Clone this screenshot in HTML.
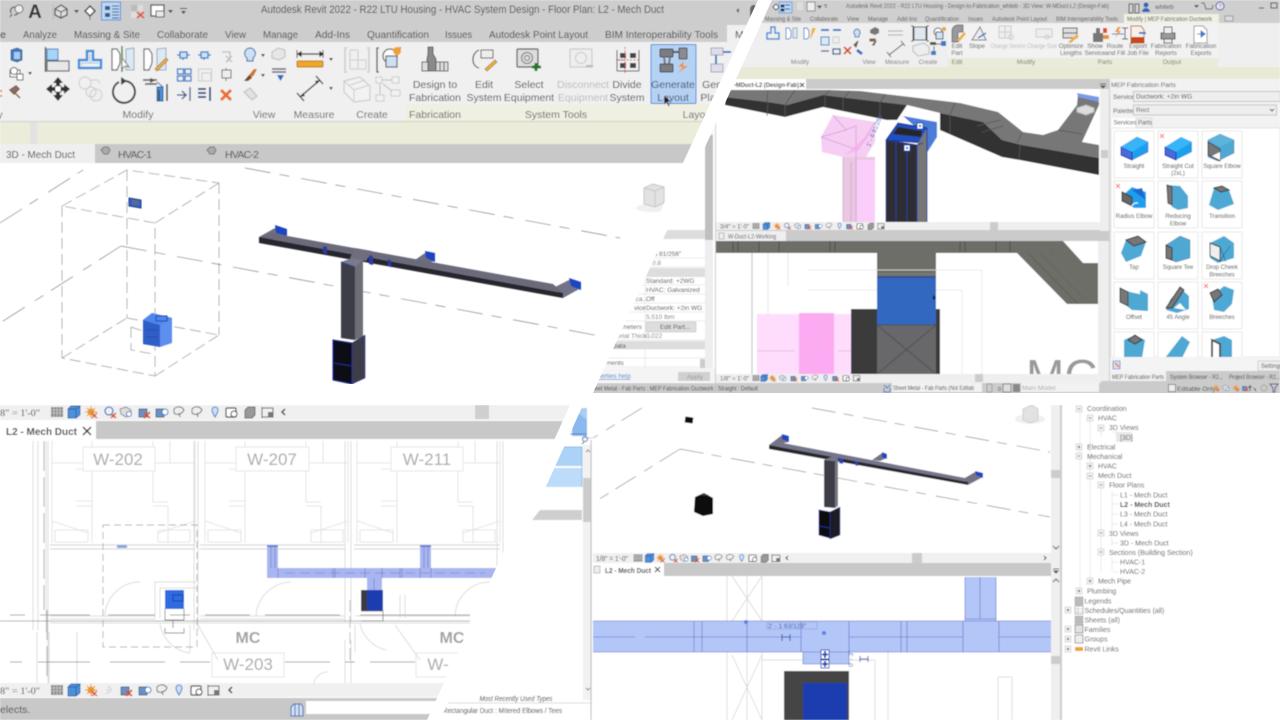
<!DOCTYPE html>
<html><head><meta charset="utf-8"><title>Revit</title>
<style>
html,body{margin:0;padding:0;background:#fff;width:1280px;height:720px;overflow:hidden}
svg{display:block;font-family:"Liberation Sans",sans-serif}
.b1{filter:url(#bl1)}.b2{filter:url(#bl2)}
</style></head><body>
<svg width="1280" height="720" viewBox="0 0 1280 720" xmlns="http://www.w3.org/2000/svg">
<defs>
<filter id="bl1" x="0" y="0" width="100%" height="100%"><feGaussianBlur stdDeviation="0.4"/></filter>
<filter id="bl2" x="0" y="0" width="100%" height="100%"><feGaussianBlur stdDeviation="0.55"/></filter>
<clipPath id="cTL"><polygon points="0,0 758,0 576,395 0,395"/></clipPath>
<clipPath id="cTR"><polygon points="772,0 1280,0 1280,393 593,393"/></clipPath>
<clipPath id="cBL"><polygon points="0,405 570,405 427,720 0,720"/></clipPath>
<clipPath id="cBR"><polygon points="583,405 1280,405 1280,720 440,720"/></clipPath>
<g id="ic-grid"><rect x="-6" y="-5" width="12" height="10" fill="#8c8c8c"/><path d="M-6-2H6M-6 1H6M-3-5V5M0-5V5M3-5V5" stroke="#ddd" stroke-width=".6"/></g>
<g id="ic-cube"><path d="M-6-3 2-3 2 6-6 6ZM-6-3-3-6 6-6 2-3ZM2-3 6-6 6 3 2 6Z" fill="#4d8fd8" stroke="#1e5aa8" stroke-width=".7"/></g>
<g id="ic-sun"><circle r="3.5" fill="#f0a030"/><path d="M-6 0H6M0-6V6M-4-4 4 4M-4 4 4-4" stroke="#e8932a" stroke-width="1"/><path d="M1 2 6 6M6 1 1 6" stroke="#d04020" stroke-width="1.2"/></g>
<g id="ic-shade"><circle cx="-1" cy="-1" r="4" fill="none" stroke="#3a7cc8" stroke-width="1.3"/><path d="M1 2 6 6M6 1 1 6" stroke="#d84a20" stroke-width="1.5"/></g>
<g id="ic-crop"><path d="M-6-3 0-5 5-2 5 3 0 5-5 2Z" fill="#ddd" stroke="#777" stroke-width=".8"/><circle cx="3" cy="2" r="2.5" fill="#fff" stroke="#3a7cc8"/></g>
<g id="ic-hide"><path d="M-6-3H2V5H-6Z" fill="#6a8fc8" stroke="#355" stroke-width=".7"/><path d="M-1 1 5 6M5 0-1 6" stroke="#d84a20" stroke-width="1.6"/></g>
<g id="ic-temp"><path d="M-6-3H2V5H-6Z" fill="#6a8fc8" stroke="#355" stroke-width=".7"/><circle cx="3" cy="0" r="3" fill="#fff" stroke="#3a7cc8"/></g>
<g id="ic-glass"><path d="M-5-3C-2-6 3-6 5-2 3 2-2 4-5 1Z" fill="#eee" stroke="#666" stroke-width=".9"/><path d="M0 1 1 5" stroke="#666"/></g>
<g id="ic-pin"><path d="M0 5C-3 0-3-1-3-2A3 3 0 0 1 3-2C3-1 3 0 0 5Z" fill="#cfe0f5" stroke="#3a7cc8" stroke-width="1"/></g>
<g id="ic-cam"><rect x="-6" y="-4" width="10" height="9" rx="1" fill="#fff" stroke="#444" stroke-width="1.2"/><circle cx="2" cy="2" r="3" fill="#fff" stroke="#333"/></g>
<g id="ic-box"><path d="M-5-2-2-5 5-5 5 3 2 6-5 6Z" fill="#999" stroke="#555" stroke-width=".8"/></g>
<g id="ic-sec"><path d="M-6-5V6M-6-4H5V5H-6" fill="none" stroke="#555" stroke-width="1"/><rect x="0" y="0" width="5" height="5" fill="#777"/></g>
<g id="plus"><rect x="-3" y="-3" width="6" height="6" fill="#f2f2f2" stroke="#d0d0d0" stroke-width=".7"/><path d="M-1.500 0H1.500M0-1.500V1.500" stroke="#666" stroke-width=".7"/></g>
<g id="minus"><rect x="-3" y="-3" width="6" height="6" fill="#f2f2f2" stroke="#d0d0d0" stroke-width=".7"/><path d="M-1.500 0H1.500" stroke="#666" stroke-width=".7"/></g>
</defs>

<rect width="1280" height="720" fill="#fff"/>

<!-- ===== TOP LEFT ===== -->
<g clip-path="url(#cTL)"><g class="b1">
<rect width="760" height="43" fill="#cdcdcd"/>
<rect y="42" width="760" height="80" fill="#f0f0f0"/>
<rect x="405" y="104" width="355" height="17" fill="#eff0e2"/>
<rect y="121" width="760" height="1" fill="#d0d0c4"/>
<rect y="122" width="760" height="22" fill="#ebecd9"/>
<rect x="30" y="122" width="7" height="22" fill="#e2e2e2"/>
<rect y="144" width="760" height="19" fill="#c8c8c8"/>
<rect y="144" width="95" height="19" fill="#efefef"/>

<!-- QAT -->
<path d="M11 13a4 4 0 1 1 3 2M10 17l2-3" fill="none" stroke="#666" stroke-width="1.3"/><circle cx="19" cy="9" r="4" fill="#eee" stroke="#666"/>
<text x="35" y="18" font-size="19" font-weight="bold" fill="#333" text-anchor="middle">A</text>
<line x1="53" y1="4" x2="53" y2="20" stroke="#bbb"/>
<path d="M55 9 61 5 67 9 67 15 61 18 55 15Z" fill="#ddd" stroke="#555" stroke-width="1.3"/><path d="M55 9 61 12 67 9M61 12V18" stroke="#555" fill="none"/>
<path d="M74 10h5l-2.500 3z" fill="#444"/>
<path d="M85 11 90 6 95 11 90 16Z" fill="#fff" stroke="#444" stroke-width="1.5"/><path d="M90 16V20" stroke="#666"/>
<rect x="101.500" y="2" width="19" height="18" fill="#bcd6f5" stroke="#4a90d8"/>
<path d="M105 6h5v4h-5zM105 13h5v4h-5z" fill="#3a5a88"/><path d="M112 6h7M112 9h7M112 12h7M112 15h7M112 18h7" stroke="#2a4a7a"/>
<rect x="131" y="5" width="6" height="6" fill="#bbb"/><rect x="138" y="5" width="5" height="6" fill="#ddd"/><rect x="131" y="12" width="6" height="6" fill="#ddd"/><path d="M137 12 144 18M144 12 137 18" stroke="#e05030" stroke-width="1.600"/>
<rect x="151" y="5" width="13" height="11" fill="#fff" stroke="#555" stroke-width="1.300"/><rect x="156" y="11" width="8" height="6" fill="#e8e8e8" stroke="#555"/>
<path d="M168 10h5l-2.500 3zM181 11h5l-2.500 3z" fill="#444"/><path d="M180 8.500h7" stroke="#444"/>

<text x="261" y="13" font-size="11" fill="#4d4d4d" textLength="403" lengthAdjust="spacingAndGlyphs">Autodesk Revit 2022 - R22 LTU Housing - HVAC System Design - Floor Plan: L2 - Mech Duct</text>
<path d="M739 8v5l-3-2.500zM752 5h4v12h-6v-9z" fill="#666"/>

<g font-size="10.500" fill="#4a4a4a">
<text x="0" y="38" textLength="6">ce</text>
<text x="23" y="38" textLength="34" lengthAdjust="spacingAndGlyphs">Analyze</text>
<text x="74" y="38" textLength="66" lengthAdjust="spacingAndGlyphs">Massing &amp; Site</text>
<text x="157" y="38" textLength="51" lengthAdjust="spacingAndGlyphs">Collaborate</text>
<text x="225" y="38" textLength="21" lengthAdjust="spacingAndGlyphs">View</text>
<text x="263" y="38" textLength="35" lengthAdjust="spacingAndGlyphs">Manage</text>
<text x="315" y="38" textLength="35" lengthAdjust="spacingAndGlyphs">Add-Ins</text>
<text x="367" y="38" textLength="62" lengthAdjust="spacingAndGlyphs">Quantification</text>
<text x="445" y="38" textLength="27" lengthAdjust="spacingAndGlyphs">Issues</text>
<text x="489" y="38" textLength="99" lengthAdjust="spacingAndGlyphs">Autodesk Point Layout</text>
<text x="605" y="38" textLength="113" lengthAdjust="spacingAndGlyphs">BIM Interoperability Tools</text>
</g>
<rect x="727" y="25" width="30" height="17" fill="#f0f0f0"/>
<text x="735" y="38" font-size="10.500" fill="#4a4a4a">M</text>

<!-- Ribbon left icons -->
<path d="M11 50 17 48 22 50 22 60 17 62 11 60Z" fill="#3a7cc8" stroke="#245" stroke-width=".6"/><path d="M14 52h6v7h-6z" fill="#fff" opacity=".6"/>
<rect x="10" y="70" width="10" height="7" fill="#fff" stroke="#555"/><rect x="17" y="74" width="6" height="6" fill="#fff" stroke="#555"/><circle cx="14" cy="71" r="3.500" fill="#fff" stroke="#666"/>
<path d="M28 72h4l-2 3z" fill="#444"/>
<path d="M14 92 20 98M10 90l6-4 3 3-5 5z" stroke="#8a5a3a" fill="#777" stroke-width="1.500"/>
<path d="M0 91h2M0 96h2" stroke="#e88a20" stroke-width="2"/>
<!-- align -->
<line x1="45.500" y1="47" x2="45.500" y2="72" stroke="#555" stroke-width="1.500"/>
<rect x="47" y="49" width="11" height="11" fill="#a8d4f7" stroke="#3a7cc8"/>
<rect x="47" y="61" width="22" height="10" fill="#e8e8e8" stroke="#666" stroke-width="1.200"/>
<!-- offset -->
<path d="M79 68V60h8V51h6v9h8v8Z" fill="none" stroke="#4a90d8" stroke-width="2.500"/><path d="M82 65V63h8V54h0v9h9" fill="none" stroke="#9cc4ec" stroke-width="1"/>
<!-- mirror -->
<path d="M112 49h5l3 5v9l-3 7h-5z" fill="#fff" stroke="#666" stroke-width="1.200"/><path d="M126 49 134 48V70H126Z" fill="#dbe8f5" stroke="#9ab"/><path d="M122 46V72" stroke="#4a8a4a" stroke-width="1.500"/>
<path d="M122 58l0 11 3-3 4 1z" fill="#fff" stroke="#777"/>
<path d="M144 49h5l3 5v9l-3 7h-5z" fill="#fff" stroke="#666" stroke-width="1.200"/><path d="M157 49 166 48V70H157Z" fill="#dbe8f5" stroke="#9ab"/>
<path d="M155 69 166 58 168 60 157 71Z" fill="#f0b040" stroke="#a06818" stroke-width=".7"/>
<!-- small grid of modify -->
<g fill="none" stroke="#3a7cc8" stroke-width="1.300">
<path d="M177 55h13M183 52v8"/><rect x="180" y="52" width="7" height="6" fill="#cfe3f7"/>
<path d="M198 55h13M204 52v8"/><rect x="201" y="52" width="7" height="6" fill="#cfe3f7"/>
<rect x="177.500" y="69" width="6" height="5"/><rect x="185" y="69" width="6" height="5"/><rect x="177.500" y="76" width="6" height="5"/><rect x="185" y="76" width="6" height="5"/>
<path d="M177 95h10M182 91l4 4-4 4M190 87v14" stroke="#3a5a88"/>
<path d="M198 93h8M198 97h8M198 89h8M210 87v14" stroke="#3a5a88" stroke-width="2"/>
</g>
<rect x="198.500" y="69" width="13" height="12" fill="#f0f0f0" stroke="#ccc"/><rect x="202" y="73" width="9" height="8" fill="none" stroke="#ccc"/>
<path d="M222 52h8v6l-3 4M226 56l6 6M232 56l-6 6" fill="none" stroke="#bbb" stroke-width="1.200"/>
<path d="M222 70h9v8h-9zM226 70v-2M226 78v3" fill="#eee" stroke="#666"/>
<path d="M221 90l10 10M231 90l-10 10" stroke="#ea7030" stroke-width="3"/>
<!-- View -->
<path d="M250 48a5.500 5.500 0 0 1 3 10v3h-6v-3a5.500 5.500 0 0 1 3-10z" fill="#cfe0f5" stroke="#4a7cb8" stroke-width="1.200"/>
<path d="M261 54h4l-2 3zM261 74h4l-2 3z" fill="#444"/>
<path d="M272 52l6-4 7 2v7l-6 3-7-2z" fill="#e6e6e6" stroke="#bbb"/>
<path d="M254 69l-5 6-5 6 5-1 5-5 3-6z" fill="#c87830"/><path d="M244 81l5-6 3 3-4 3z" fill="#7a4a20"/>
<path d="M272 69h14M272 72h14" stroke="#667" stroke-width="1.500"/><path d="M277 75h7l-3.500 6z" fill="#2a6ac8"/>
<path d="M244 92 250 88 257 96 252 100Z" fill="#e2e2e2" stroke="#bbb"/>
<!-- Measure -->
<path d="M298 54h25M298 54l3-2v4zM323 54l-3-2v4z" stroke="#333" stroke-width="1.200" fill="#333"/><path d="M297 50v8M323 50v8" stroke="#333"/>
<rect x="297" y="61" width="26" height="6" rx="1" fill="#f0a820" stroke="#b87810"/>
<path d="M300 97 320 80M297 93l7 8M316 76l7 8" stroke="#333" stroke-width="1.300" fill="none"/><path d="M300 97l5-1-2-3zM320 80l-5 1 2 3z" fill="#333"/>
<path d="M329 87h4l-2 3zM329 58h4l-2 3z" fill="#444"/>
<!-- Create -->
<path d="M347 48h-2v24h2M367 48h2v24h-2" stroke="#ccc" fill="none" stroke-width="1.500"/><path d="M350 50h8v10h8v9h-16z" fill="#f0f0f0" stroke="#ccc"/><path d="M350 60h8v9" stroke="#ccc" fill="none"/>
<path d="M379 48h-2v24h2M399 48h2" stroke="#555" fill="none" stroke-width="1.300"/><circle cx="390" cy="56" r="7" fill="#fff" stroke="#666" stroke-width="1.300"/><rect x="386" y="56" width="11" height="11" fill="#cfe0f5" stroke="#666" stroke-width="1.200"/><circle cx="397" cy="51" r="4" fill="#f0a030"/>
<path d="M344 81 360 77 370 86 370 100 354 102 344 92Z" fill="#f2f2f2" stroke="#ccc" stroke-width="1.200"/><path d="M350 85 365 80M354 90 369 85M354 90V101M344 81 354 90" stroke="#ccc" fill="none"/>
<g fill="#f2f2f2" stroke="#ccc"><rect x="376" y="77" width="6" height="6"/><rect x="392" y="77" width="7" height="6"/><rect x="376" y="95" width="8" height="6"/><rect x="391" y="90" width="9" height="6"/></g><path d="M382 80h10M380 84v10M383 84l9 7" stroke="#bbb" fill="none"/>
<!-- Modify big -->
<g fill="#333"><path d="M58 77l5 6h-3v4h-4v-4h-3zM58 101l5-6h-3v-4h-4v4h-3zM46 89l6-5v3h4v4h-4v3zM70 89l-6-5v3h-4v4h4v3z"/></g><rect x="55" y="86" width="6" height="6" fill="#fff" stroke="#666"/>
<circle cx="85" cy="83" r="6" fill="none" stroke="#ccc"/><circle cx="96" cy="95" r="6" fill="#eee" stroke="#ccc"/><circle cx="91" cy="92" r="5" fill="none" stroke="#ccc"/><path d="M90 80h8l2 4" fill="none" stroke="#ccc"/>
<path d="M119 82a11 11 0 1 0 7-1" fill="none" stroke="#444" stroke-width="2"/><path d="M121 77l6 4-6 4z" fill="#444"/>
<path d="M143 80h14M145 84h12" stroke="#555" stroke-width="1.500"/><path d="M150 78l6 2-6 3" fill="#555"/>
<path d="M157 87h6v14h-6zM157 82l6 5" fill="#4a90d8" stroke="#2a60a8"/><path d="M159 101V90M167 101V84" stroke="#444" stroke-width="1.500"/>

<!-- big tool icons -->
<path d="M428 47h5v7l3 5v12h-9V59l1-5z" fill="#8a8a8a" stroke="#444" stroke-width=".8"/><rect x="436" y="62" width="12" height="9" fill="#ddd" stroke="#555"/><path d="M440 62v9M444 62v9" stroke="#555"/><rect x="422" y="62" width="6" height="9" fill="#ddd" stroke="#555"/>
<rect x="481" y="50" width="12" height="8" fill="#eee" stroke="#555"/><path d="M473 60a10 10 0 0 1 6-10M473 60a8 8 0 0 0 6 8" fill="none" stroke="#555" stroke-width="1.200"/><path d="M485 69 495 60 497 62 487 71Z" fill="#f0b040" stroke="#a06818" stroke-width=".7"/>
<rect x="517" y="49" width="21" height="18" rx="1" fill="#ddd" stroke="#555" stroke-width="1.200"/><circle cx="527" cy="58" r="5.500" fill="none" stroke="#777"/><circle cx="527" cy="58" r="2.500" fill="none" stroke="#777"/><path d="M536 63v8M532 67h9" stroke="#1a7a28" stroke-width="3"/>
<rect x="570" y="49" width="22" height="18" rx="1" fill="#eee" stroke="#ccc" stroke-width="1.200"/><circle cx="581" cy="58" r="5.500" fill="none" stroke="#ccc"/><path d="M586 66h7" stroke="#bbb" stroke-width="2"/>
<path d="M617 50v21M617 60h8M617 71h22M639 50v21" stroke="#444" stroke-width="1" fill="none"/><rect x="620" y="53" width="6" height="5" fill="#444"/><rect x="630" y="53" width="6" height="5" fill="#444"/><rect x="620" y="63" width="6" height="5" fill="#444"/><rect x="630" y="63" width="6" height="5" fill="#444"/><path d="M625 47v26M616 60h24" stroke="#d84a40" stroke-dasharray="2 1.500"/>
<!-- generate -->
<rect x="651" y="44.500" width="45" height="59" rx="1" fill="#b5d2f5" stroke="#3d8bdc"/>
<rect x="660" y="49" width="13" height="8" rx="1" fill="#7c7c84" stroke="#444"/><rect x="679" y="48" width="8" height="11" rx="1" fill="#8c8c90" stroke="#444"/><path d="M673 52h6" stroke="#555" stroke-width="2"/><path d="M664 57 665 64M670 57 669 64" stroke="#777" stroke-width="2"/>
<rect x="660" y="64" width="13" height="8" rx="1" fill="#7c7c84" stroke="#444"/><path d="M684 61 678 67H683L678 73 688 66H683Z" fill="#e8932a"/>
<!-- gen -->
<rect x="711" y="48" width="12" height="7" fill="#dde" stroke="#aaa"/><rect x="711" y="64" width="12" height="8" fill="#dde" stroke="#aaa"/><path d="M716 55v9" stroke="#3a7cc8" stroke-width="2"/><path d="M723 52h8" stroke="#3a7cc8" stroke-width="2"/>

<g font-size="10.500" fill="#4d4d4d" text-anchor="middle">
<text x="435" y="88">Design to</text><text x="435" y="101">Fabrication</text>
<text x="484" y="88">Edit</text><text x="484" y="101">System</text>
<text x="529" y="88">Select</text><text x="529" y="101">Equipment</text>
<text x="583" y="88" fill="#bbb">Disconnect</text><text x="583" y="101" fill="#bbb">Equipment</text>
<text x="627" y="88">Divide</text><text x="627" y="101">System</text>
<text x="673" y="88" fill="#3a4a66">Generate</text><text x="673" y="101" fill="#3a4a66">Layout</text>
<text x="712" y="88">Gen</text><text x="708" y="101">Pla</text>
</g>
<path d="M664 95v10l2.500-2.500 2 4 1.500-.7-2-4h3.500z" fill="#1a1a2a" stroke="#fff" stroke-width=".4"/>
<g font-size="10.500" fill="#666" text-anchor="middle">
<text x="138" y="118">Modify</text><text x="264" y="118">View</text><text x="314" y="118">Measure</text><text x="372" y="118">Create</text><text x="435" y="118">Fabrication</text><text x="556" y="118">System Tools</text><text x="694" y="118">Layo</text><text x="0" y="118">y</text>
</g>
<g font-size="10.500" fill="#4d4d4d">
<text x="6" y="158" textLength="69" lengthAdjust="spacingAndGlyphs">3D - Mech Duct</text>
<text x="118" y="158" textLength="34">HVAC-1</text>
<text x="225" y="158" textLength="34">HVAC-2</text></g>
<path d="M101 150l3-3h4l2 3-2 4h-4z" fill="#aaa" stroke="#777"/><path d="M207 150l3-3h4l2 3-2 4h-4z" fill="#aaa" stroke="#777"/>

<!-- 3D dashed -->
<g fill="none" stroke="#999" stroke-width=".7" stroke-dasharray="11 5">
<path d="M62 206V358L155 376V223ZM127 170V318M219 183V335M155 223 219 183M155 376 219 335M62 358 127 318"/>
<path d="M62 206 127 170 219 183"/>
<path d="M127 318 219 335" />
<path d="M131 327V350L153 354M131 327 170 340"/>
</g>
<g fill="none" stroke="#888" stroke-width=".7" stroke-dasharray="26 9 10 12">
<path d="M0 223 83 170M121 246 0 323"/>
<path d="M245 168 620 238M121 246 605 337"/>
</g>
<!-- small cube -->
<path d="M129 198 141 200V208L129 206Z" fill="#2f62c4" stroke="#1a3a90"/><rect x="132" y="200" width="7" height="5" fill="#5a6a8a"/>
<!-- blue cube -->
<path d="M143 320 152 313 172 318V343L160 347 143 344Z" fill="#5b8ff0"/><path d="M143 320 160 325V347L143 344Z" fill="#2f5fc8"/><path d="M143 320 152 313 172 318 160 325Z" fill="#4f86ee"/><rect x="156" y="316" width="11" height="5" fill="none" stroke="#1e3fa0"/><path d="M146 330H158M146 337H158" stroke="#2a4aa0"/>
<!-- T duct -->
<g>
<path d="M259 237 275 228 285 230 285 236 271 240Z" fill="#6e6e80"/>
<path d="M275 225 287 229V236L276 233Z" fill="#1f44c0"/>
<path d="M415 260 425 253 435 255V261L427 263Z" fill="#6e6e80"/><path d="M425 251 435 253V262L426 258Z" fill="#1f44c0"/>
<path d="M553 288 569 280 581 284 581 288 563 298Z" fill="#72728a"/><path d="M569 278 581 282V290L571 286Z" fill="#1f44c0"/>
<path d="M259 237 271 233 553 284 563 293Z" fill="#6a6a7a"/>
<path d="M259 237 563 293V298L259 243Z" fill="#26262e"/>
<path d="M323 246 327 247V254L323 253ZM369 255 373 256V265L369 264ZM388 259 391 260V267L388 266Z" fill="#2a3aa0"/>
<path d="M341 262 360 255 363 258 363 262 355 267Z" fill="#7a7a88"/>
<path d="M355 248 372 251 366 261 350 258Z" fill="#6e6e80"/>
<path d="M341 262 355 267V340L341 338Z" fill="#3c3c46"/>
<path d="M355 267 363 260V337L355 340Z" fill="#6e6e76"/>
<path d="M341 262 355 267" stroke="#2a3aa0"/>
<path d="M333 340 352 343V384L333 380Z" fill="#0c0c12" stroke="#1e2f90"/>
<path d="M352 343 365 335V378L352 384Z" fill="#3e3e48" stroke="#1e2f90" stroke-width=".5"/>
<path d="M333 363 352 366" stroke="#1e2f90"/>
</g>
<!-- viewcube -->
<ellipse cx="652" cy="208" rx="16" ry="4" fill="#f0f0f0"/><path d="M644 188 653 184 664 187V203L655 207 644 204Z" fill="#e2e2e2" stroke="#c8c8c8"/><path d="M644 188 655 191 664 187M655 191V207" fill="none" stroke="#c8c8c8"/>
</g></g>

<!-- ===== TOP RIGHT ===== -->
<g clip-path="url(#cTR)"><g class="b2">
<rect x="580" width="700" height="394" fill="#cbcbcb"/>
<rect x="580" y="0" width="700" height="23" fill="#cfcfcf"/>
<rect x="580" y="23" width="700" height="44" fill="#efefef"/>
<rect x="1219" y="14" width="61" height="9" fill="#cfcfcf"/>
<rect x="1124" y="14" width="95" height="9" fill="#eff1e2"/>
<rect x="948" y="23" width="270" height="45" fill="#f2f2f2"/>
<rect x="948" y="58" width="270" height="9" fill="#e9ecd8"/>
<rect x="580" y="67" width="700" height="12" fill="#e9ead6"/>

<rect x="779" y="2" width="13" height="11" fill="#bcd6f5" stroke="#4a90d8" stroke-width=".7"/><path d="M781 5h3v2h-3zM781 9h3v2h-3zM785 5h5M785 9h5" stroke="#2a4a7a"/>
<path d="M773 7l3-3 3 3-3 3z" fill="#fff" stroke="#555"/>
<rect x="797" y="2" width="6" height="8" fill="#ddd"/><rect x="807" y="2" width="8" height="9" fill="#eee" stroke="#666" stroke-width=".7"/><path d="M818 6h3l-1.500 2zM824 5h3M825 7h2" stroke="#555" fill="#555"/>

<text x="846" y="8" font-size="6.500" fill="#555" textLength="263" lengthAdjust="spacingAndGlyphs">Autodesk Revit 2022 - R22 LTU Housing - Design-to-Fabrication_whiteb - 3D View: W-MDuct-L2 (Design-Fab)</text>
<path d="M1129 4h4v9h-4zM1135 4h4v9h-4z" fill="none" stroke="#555"/><circle cx="1146" cy="5" r="2.500" fill="#3366bb"/><path d="M1142 12a4 4 0 0 1 8 0z" fill="#3366bb"/>
<text x="1155" y="9" font-size="6.500" fill="#555">whiteb</text>
<path d="M1194 5h5l-2.500 3z" fill="#555"/><path d="M1201 3h3l2 6h6l1-4" fill="none" stroke="#666"/><circle cx="1220" cy="6" r="4" fill="#eee" stroke="#44a"/><text x="1220" y="8.500" font-size="6" fill="#44a" text-anchor="middle">?</text>
<path d="M1259 8h5" stroke="#444"/><rect x="1271" y="3" width="6" height="5" fill="none" stroke="#444"/>

<g font-size="6.500" fill="#555">
<text x="765" y="21" textLength="36" lengthAdjust="spacingAndGlyphs">Massing &amp; Site</text>
<text x="810" y="21" textLength="28" lengthAdjust="spacingAndGlyphs">Collaborate</text>
<text x="847" y="21" textLength="12" lengthAdjust="spacingAndGlyphs">View</text>
<text x="868" y="21" textLength="20" lengthAdjust="spacingAndGlyphs">Manage</text>
<text x="897" y="21" textLength="20" lengthAdjust="spacingAndGlyphs">Add-Ins</text>
<text x="925" y="21" textLength="34" lengthAdjust="spacingAndGlyphs">Quantification</text>
<text x="968" y="21" textLength="15" lengthAdjust="spacingAndGlyphs">Issues</text>
<text x="992" y="21" textLength="55" lengthAdjust="spacingAndGlyphs">Autodesk Point Layout</text>
<text x="1056" y="21" textLength="62" lengthAdjust="spacingAndGlyphs">BIM Interoperability Tools</text>
<text x="1127" y="21" textLength="85" lengthAdjust="spacingAndGlyphs">Modify | MEP Fabrication Ductwork</text>
</g>
<rect x="1225" y="16" width="8" height="5" fill="#ddd" stroke="#777" stroke-width=".6"/>

<!-- left mini ribbon -->
<path d="M767 39V33h4V27h4v6h4v6Z" fill="none" stroke="#4a90d8" stroke-width="1.500"/>
<path d="M786 28h3l2 3v6l-2 2h-3z" fill="#fff" stroke="#4a8ad0"/><path d="M793 28h4v10h-4z" fill="#dbe8f5" stroke="#9ab"/>
<path d="M804 28h3l2 3v6l-2 2h-3z" fill="#fff" stroke="#4a8ad0"/><path d="M812 28h4l-6 12z" fill="#f0b040"/>
<path d="M821 30h8M833 30h8" stroke="#3a7cc8" stroke-width="2"/>
<rect x="821" y="37" width="8" height="8" fill="#dbe8f5" stroke="#3a7cc8"/><rect x="833" y="37" width="6" height="6" fill="#eee" stroke="#ccc"/>
<path d="M821 51h8M833 49h7v5h-7z" stroke="#3a5a88" fill="none" stroke-width="1.300"/><path d="M844 47 851 54M851 47 844 54" stroke="#d84a20" stroke-width="1.800"/>
<path d="M857 29a3.500 3.500 0 0 1 2 6v2h-4v-2a3.500 3.500 0 0 1 2-6z" fill="#cfe0f5" stroke="#4a7cb8"/><path d="M870 30l5-3 4 2v4l-4 2-5-2z" fill="#777"/>
<path d="M858 41l-4 4 2 2zM876 39h-6v2h6l-2 4h-2" fill="#a06030" stroke="#555"/>
<path d="M858 49l5 4-2 2-5-4z" fill="#3a6ac8"/>
<path d="M888 31h15M888 35h15" stroke="#bbb" stroke-width="1.300"/><path d="M889 55 903 44" stroke="#555"/><path d="M887 52l4 5M901 41l4 5" stroke="#555"/>
<rect x="914" y="27" width="12" height="13" fill="#dfe7ef" stroke="#555"/><path d="M911 26h2v15h-2M929 26h-2v15h2" fill="none" stroke="#555"/>
<circle cx="938" cy="32" r="4" fill="#fff" stroke="#555"/><rect x="936" y="32" width="7" height="7" fill="#cfe0f5" stroke="#555"/><circle cx="944" cy="29" r="2" fill="#f0a030"/>
<path d="M913 46 924 43 929 47V54L918 56 913 51Z" fill="#eee" stroke="#bbb"/>
<rect x="930" y="42" width="6" height="3" fill="#555"/><rect x="941" y="41" width="5" height="5" fill="#3a7cc8"/><rect x="931" y="51" width="5" height="4" fill="#3a7cc8"/><path d="M936 44h5M934 46v5" stroke="#555"/>

<!-- contextual ribbon -->
<path d="M952 42V30a6 6 0 0 1 6-5h5v7h-3a2 2 0 0 0-2 2v8z" fill="#999" stroke="#555" stroke-width=".7"/><path d="M957 40 964 32 966 34 959 42Z" fill="#f0b040"/>
<path d="M972 40 980 27 986 40Z" fill="#eee" stroke="#777"/><path d="M978 38 986 33" stroke="#3a7cc8" stroke-width="1.500"/>
<rect x="999" y="26" width="12" height="12" fill="#efefef" stroke="#ccc"/><path d="M1005 26v12M999 32h12" stroke="#ccc"/><circle cx="1011" cy="37" r="2.500" fill="none" stroke="#ccc"/>
<rect x="1036" y="29" width="16" height="8" fill="#eee" stroke="#ccc"/><circle cx="1047" cy="37" r="2" fill="none" stroke="#ccc"/>
<rect x="1063" y="28" width="14" height="10" fill="#ddd" stroke="#555"/><path d="M1063 33h14" stroke="#555"/><path d="M1068 42 1077 34 1079 36 1071 43Z" fill="#f0b040"/>
<path d="M1096 28h4v5h3v9h-10v-9h3z" fill="#777"/><rect x="1103" y="28" width="4" height="5" fill="#d85030"/><rect x="1103" y="35" width="6" height="4" fill="#e8932a"/>
<path d="M1112 34h12" stroke="#3a7cc8"/><path d="M1118 27l-3 5h3l-3 6 6-7h-3l3-4z" fill="#e8932a"/><path d="M1122 28h6M1125 28v11M1122 39h6" stroke="#444"/>
<path d="M1131 26h10l3 4v13h-13z" fill="#f6f2ea" stroke="#c06020"/><rect x="1131" y="37" width="13" height="6" fill="#c84a18"/><path d="M1139 33h7" stroke="#3a7cc8" stroke-width="2"/>
<path d="M1161 33h14v6h-14z" fill="#999" stroke="#555"/><path d="M1164 33v-6h8v6M1164 39h8v4h-8z" fill="#eee" stroke="#555"/>
<path d="M1194 26h9l4 4v13h-13z" fill="#fff" stroke="#999"/><path d="M1197 34h6M1201 31l4 3-4 3z" fill="#3a7cc8" stroke="#3a7cc8"/>

<g font-size="6.200" fill="#555" text-anchor="middle">
<text x="957" y="48">Edit</text><text x="957" y="55">Part</text>
<text x="977" y="48">Slope</text>
<text x="1008" y="48" fill="#bbb" textLength="35" lengthAdjust="spacingAndGlyphs">Change Service</text><text x="1042" y="48" fill="#bbb" textLength="30" lengthAdjust="spacingAndGlyphs">Change Size</text>
<text x="1071" y="48">Optimize</text><text x="1071" y="55">Lengths</text>
<text x="1095" y="48">Show</text><text x="1095" y="55">Service</text>
<text x="1115" y="48">Route</text><text x="1115" y="55">and Fill</text>
<text x="1138" y="48">Export</text><text x="1138" y="55">Job File</text>
<text x="1166" y="48">Fabrication</text><text x="1166" y="55">Reports</text>
<text x="1201" y="48">Fabrication</text><text x="1201" y="55">Exports</text>
<g fill="#777"><text x="800" y="64">Modify</text><text x="869" y="64">View</text><text x="897" y="64">Measure</text><text x="928" y="64">Create</text><text x="957" y="64">Edit</text><text x="1026" y="64">Modify</text><text x="1105" y="64">Parts</text><text x="1172" y="64">Output</text></g>
</g>

<!-- Props panel -->
<rect x="590" y="80" width="125" height="305" fill="#fff"/>
<g stroke="#e4e4e4" stroke-width=".7">
<path d="M590 258H705M590 267H705M590 276H705M590 285H705M590 294H705M590 303H705M590 312H705M590 321H705M590 340H705M590 349H705M590 358H705M590 367H705"/>
<path d="M645 240V368"/>
</g>
<rect x="590" y="230" width="115" height="9" fill="#ddd"/>
<rect x="590" y="268" width="115" height="9" fill="#ddd"/>
<rect x="590" y="341" width="115" height="8" fill="#ddd"/>
<rect x="646" y="322" width="50" height="10" fill="#ddd" stroke="#bbb" stroke-width=".5"/>
<rect x="705" y="80" width="8" height="295" fill="#eee"/><rect x="705" y="135" width="8" height="105" fill="#bfbfbf"/><rect x="700" y="359" width="5" height="9" fill="#ccc"/>
<g font-size="6.500" fill="#444">
<text x="654" y="256">s 81/256"</text><text x="652" y="265" fill="#777">0.8</text>
<text x="646" y="283">Standard: +2WG</text><text x="646" y="292">HVAC: Galvanized</text><text x="634" y="301" fill="#666">ica...</text><text x="646" y="301">Off</text>
<text x="634" y="310">vice</text><text x="646" y="310">Ductwork: +2in WG</text><text x="646" y="319" fill="#777">5.510 lbm</text>
<text x="622" y="329">meters</text><text x="660" y="329">Edit Part...</text>
<text x="617" y="338" fill="#777">erial Thick...</text><text x="646" y="338" fill="#777">0.022</text>
<text x="612" y="348">Data</text><text x="606" y="365">ments</text>
</g>
<rect x="590" y="368" width="125" height="14" fill="#f4f4f4"/>
<text x="597" y="378" font-size="6.500" fill="#3a7cc8" text-decoration="underline">perties help</text>
<rect x="678" y="372" width="32" height="9" fill="#d0d0d0"/><text x="695" y="379" font-size="6.500" fill="#999" text-anchor="middle">Apply</text>

<!-- View 1 tab row -->
<rect x="716" y="79" width="385" height="10" fill="#cbcbcb"/>
<rect x="716" y="79" width="90" height="10" fill="#fff"/>
<text x="734" y="87" font-size="6.500" font-weight="bold" fill="#444" textLength="65" lengthAdjust="spacingAndGlyphs">-MDuct-L2 (Design-Fab)</text>
<path d="M800 83l4 4M804 83l-4 4" stroke="#333"/>
<path d="M1100 84h6M1101 86h4l-2 2z" stroke="#555" fill="#555"/>
<!-- View 1 -->
<rect x="716" y="89" width="385" height="133" fill="#fff"/>
<!-- gray top face -->
<path d="M725 97 730 90 827 90 860 91 910 97 960 103 998 112 1023 132 1043 135 1058 130 1077 105 1078 94 1099 102 1099 105 1082 142 1099 145 1099 158 1022 145 1002 140 983 122 940 113 907 105 823 95 787 105 768 102Z" fill="#777"/>
<!-- dark faces -->
<path d="M725 97 768 102 787 105 823 95 823 107 785 117 725 105Z" fill="#333"/>
<path d="M823 95 907 105 897 120 887 120 823 107Z" fill="#333"/>
<path d="M940 113 983 122 1002 140 1022 145 1099 158 1099 175 1020 160 1002 157 940 130Z" fill="#333"/>
<path d="M768 90 767 102M768 102 767 116M795 90 785 105M785 105V117M830 90 825 95M825 95V107M850 91 843 99M843 99V110M885 94 880 103M880 103V118M955 103 950 115M950 115V134M1000 120 977 126M1003 126 982 132M1022 133 1017 143M1020 145 1019 160M1058 130 1082 134" stroke="#555" stroke-width=".8" fill="none"/>
<!-- pink -->
<path d="M821 137 833 115 875 122 875 142 863 162 843 157 822 152Z" fill="#f4c0f0" opacity=".8"/>
<path d="M843 157H875V222H843Z" fill="#e9c8e2"/>
<path d="M857 160H875V222H857Z" fill="#fbcdfb"/>
<path d="M851 162V222M843 157V222M856 160V222M821 137 858 150 875 122M833 115 846 130 821 137M845 130 856 126 856 160" fill="none" stroke="#d49cd4" stroke-width=".7"/>
<path d="M845 155 875 128 858 150Z" fill="#f8a8ee" opacity=".6"/>
<text x="870" y="147" font-size="6" fill="#3a5ab0" transform="rotate(-68 870 147)">1' - 6 81/256"</text>
<!-- blue duct -->
<path d="M903 116 937 122 937 137 923 159 919 130Z" fill="#4c7cd8"/>
<path d="M886 140 898 123 927 128 923 143Z" fill="#2050c0" stroke="#0d2a80"/>
<path d="M893 134 898 127 922 131 921 137 Z" fill="#252525"/>
<path d="M886 140 917 145V222H886Z" fill="#2f2f33"/>
<path d="M917 145 927 128V222H917Z" fill="#777"/>
<path d="M886 140V222M896 142V222M907 144V222M917 145V222M927 128V222M886 140 917 145 923 143" stroke="#1a3fa0" stroke-width="1" fill="none"/>
<rect x="917" y="123" width="6" height="6" fill="#fff" stroke="#1a4ab0"/><rect x="919" y="125" width="2" height="2" fill="#1a4ab0"/>
<rect x="904" y="145" width="6" height="6" fill="#fff" stroke="#1a4ab0"/><rect x="906" y="147" width="2" height="2" fill="#1a4ab0"/>
<path d="M1077 93 1099 97V102L1078 97Z" fill="#7a9ae8"/>
<path d="M1077 108l9-3 8 3v4l-8 3-9-3z" fill="#ddd" stroke="#bbb"/>
<rect x="1100" y="89" width="9" height="142" fill="#eee"/><rect x="1101" y="150" width="7" height="8" fill="#ccc"/>
<rect x="716" y="222" width="385" height="8" fill="#efefef"/>
<text x="720" y="228.500" font-size="6" fill="#444">3/4" = 1'-0"</text>
<g transform="translate(756,226) scale(.58)"><use href="#ic-grid"/><use href="#ic-cube" x="18"/><use href="#ic-sun" x="36"/><use href="#ic-shade" x="54"/><use href="#ic-crop" x="72"/><use href="#ic-hide" x="90"/><use href="#ic-temp" x="108"/><use href="#ic-glass" x="126"/><use href="#ic-pin" x="144"/><use href="#ic-hide" x="162"/><use href="#ic-cam" x="180"/><use href="#ic-box" x="198"/><use href="#ic-sec" x="216"/></g>
<rect x="990" y="222" width="8" height="8" fill="#ccc"/>

<rect x="716" y="231" width="385" height="10" fill="#cbcbcb"/><rect x="716" y="231" width="70" height="10" fill="#efefef"/>
<text x="728" y="238.500" font-size="6.500" fill="#555" textLength="48" lengthAdjust="spacingAndGlyphs">W-Duct-L2-Working</text>
<rect x="719" y="233" width="5" height="6" fill="#eee" stroke="#999" stroke-width=".6"/>
<!-- plan -->
<rect x="716" y="241" width="385" height="133" fill="#fff"/>
<path d="M716 241H1063L1083 263H1099V304H1067L1017 253H936V277H877V253H716Z" fill="#6e6e68"/>
<path d="M1028 253 1078 304" stroke="#5a5a54" fill="none" stroke-width=".7"/><path d="M1040 253 1085 300M1050 250 1055 255" stroke="#5a5a54" fill="none" stroke-width=".5"/>
<path d="M733 241V252M738 241V252M759 241V252M779 241V252M830 241V252M835 241V252M960 241V252M965 241V252M996 241V252M1010 241V252" stroke="#4c4c48" stroke-width=".8"/>
<path d="M877 274H936M877 277H936" stroke="#8a8a86" stroke-width=".8"/>
<path d="M752 253V374" stroke="#aaa" stroke-width=".8"/>
<path d="M768 253V374M788 253V286" stroke="#ddd" stroke-width=".7"/>
<path d="M808 270H982V374M808 290H962V374" fill="none" stroke="#e5e5e5" stroke-width=".8"/>
<rect x="757" y="314" width="42" height="60" fill="#fddcfc"/><rect x="799" y="313" width="35" height="61" fill="#fcaaf2"/><rect x="834" y="314" width="20" height="60" fill="#fddcfc"/>
<path d="M757 351H795M838 351H851M803 374 833 315" stroke="#e8b8e4" stroke-width=".8"/>
<rect x="851" y="309" width="60" height="65" fill="#3a3a3a"/>
<rect x="925" y="309" width="15" height="65" fill="#3a3a3a"/>
<rect x="877" y="277" width="59" height="48" fill="#3167c0"/>
<rect x="877" y="325" width="59" height="49" fill="#68686a"/>
<path d="M877 277H936" stroke="#1a3a90"/><path d="M877 325 936 374M936 325 877 374M877 325H936" stroke="#4a4a4a" stroke-width=".8"/>
<path d="M933 295v5l3-2z" fill="#111"/>
<text x="1026" y="392" font-size="46" fill="#9a9a9a">MC</text>
<rect x="1098" y="241" width="11" height="140" fill="#eee"/>
<rect x="716" y="374" width="385" height="9" fill="#efefef"/>
<text x="720" y="380.500" font-size="6" fill="#444">1/8" = 1'-0"</text>
<g transform="translate(756,378) scale(.58)"><use href="#ic-grid"/><use href="#ic-cube" x="14"/><use href="#ic-sun" x="28"/><use href="#ic-crop" x="46"/><use href="#ic-hide" x="66"/><use href="#ic-temp" x="84"/><use href="#ic-glass" x="102"/><use href="#ic-pin" x="120"/><use href="#ic-hide" x="138"/><use href="#ic-cam" x="156"/><use href="#ic-sec" x="174"/></g>
<rect x="975" y="374" width="8" height="8" fill="#ccc"/>

<!-- status -->
<rect x="590" y="383" width="690" height="10" fill="#cbcbcb"/>
<text x="592" y="390.500" font-size="6.500" fill="#444" textLength="166" lengthAdjust="spacingAndGlyphs">heet Metal - Fab Parts : MEP Fabrication Ductwork : Straight : Default</text>
<rect x="892" y="383" width="90" height="9" fill="#f2f2f2"/>
<text x="893" y="390" font-size="6.500" fill="#444" textLength="81" lengthAdjust="spacingAndGlyphs">Sheet Metal - Fab Parts (Not Editab</text>
<path d="M884 385l3 3 3-3M884 388v4h6v-4" fill="none" stroke="#3a7cc8"/>
<rect x="1021" y="383" width="78" height="9" fill="#f2f2f2"/><text x="1022" y="390" font-size="6.500" fill="#aaa">Main Model</text>
<rect x="987" y="384" width="5" height="8" fill="#ccc" stroke="#777" stroke-width=".5"/><text x="998" y="391" font-size="5.500" fill="#444">0</text><rect x="1003" y="384" width="8" height="8" fill="#ddd" stroke="#555" stroke-width=".6"/><rect x="1013" y="384" width="7" height="8" fill="#888"/>

<!-- Fab Panel -->
<rect x="1110" y="79" width="170" height="300" fill="#f2f2f2"/>
<text x="1111" y="87" font-size="6.500" fill="#555">MEP Fabrication Parts</text>
<text x="1113" y="99" font-size="6.500" fill="#444">Service:</text>
<rect x="1133.500" y="91.500" width="147" height="10" fill="#eee" stroke="#aaa" stroke-width=".6"/><text x="1136" y="98.500" font-size="6.500" fill="#444">Ductwork: +2in WG</text>
<text x="1113" y="113" font-size="6.500" fill="#444">Palette:</text>
<rect x="1133.500" y="105" width="143" height="10" fill="#eee" stroke="#aaa" stroke-width=".6"/><text x="1136" y="112" font-size="6.500" fill="#555">Rect</text>
<path d="M1270 109l2 2 2-2" stroke="#555" fill="none"/>
<rect x="1112" y="118" width="24" height="10" fill="#fff"/><rect x="1136" y="118" width="16" height="10" fill="#eee" stroke="#ccc" stroke-width=".5"/>
<text x="1113.500" y="124.500" font-size="6" fill="#444">Services</text><text x="1138" y="124.500" font-size="6" fill="#444">Parts</text>
<rect x="1111" y="128" width="169" height="229" fill="#fff" stroke="#ccc" stroke-width=".5"/>
<!-- cards -->
<g fill="#fff" stroke="#e8e8e8" stroke-width="1">
<rect x="1114" y="131" width="40" height="47"/><rect x="1158" y="131" width="40" height="47"/><rect x="1202" y="131" width="40" height="47"/>
<rect x="1114" y="181" width="40" height="47"/><rect x="1158" y="181" width="40" height="47"/><rect x="1202" y="181" width="40" height="47"/>
<rect x="1114" y="232" width="40" height="47"/><rect x="1158" y="232" width="40" height="47"/><rect x="1202" y="232" width="40" height="47"/>
<rect x="1114" y="282" width="40" height="47"/><rect x="1158" y="282" width="40" height="47"/><rect x="1202" y="282" width="40" height="47"/>
<rect x="1114" y="332" width="40" height="30"/><rect x="1158" y="332" width="40" height="30"/><rect x="1202" y="332" width="40" height="30"/>
</g>
<!-- straight -->
<path d="M1121 147 1137 137 1148 142 1148 152 1132 160 1121 155Z" fill="#1ea0ee" stroke="#1848b0" stroke-width=".5"/><path d="M1121 147 1132 152 1132 160 1121 155Z" fill="#4a6ad8" stroke="#1038b0"/><path d="M1121 147 1137 137 1148 142 1132 152Z" fill="#38b4f8"/>
<path d="M1165 147 1181 137 1192 142 1192 152 1176 160 1165 155Z" fill="#1ea0ee"/><path d="M1165 147 1176 152 1176 160 1165 155Z" fill="#4a6ad8" stroke="#1038b0"/><path d="M1165 147 1181 137 1192 142 1176 152Z" fill="#38b4f8"/>
<path d="M1160 134l4 4M1164 134l-4 4" stroke="#f08070"/>
<!-- sq elbow -->
<path d="M1208 140 1220 134 1234 140 1234 153 1218 161 1208 157Z" fill="#4da8d4" stroke="#226" stroke-width=".3"/><path d="M1208 142 1220 149 1220 161 1208 155Z" fill="#777" stroke="#444"/><path d="M1212 156 1220 152V160Z" fill="#fff"/><path d="M1208 140 1220 134 1234 140 1220 147Z" fill="#5cb4dc"/>
<!-- radius elbow -->
<path d="M1122 196 1132 187 1146 192 1146 208 1134 208 1128 204Z" fill="#1ea0ee"/><path d="M1122 192 1132 197V206L1122 201Z" fill="#666" stroke="#333"/><path d="M1132 190 1142 188 1146 200" fill="#1c6ad0"/><path d="M1131 208a6 6 0 0 1 7-5" fill="none" stroke="#fff"/>
<path d="M1116 184l4 4M1120 184l-4 4" stroke="#f08070"/>
<!-- reducing -->
<path d="M1167 185 1180 186 1188 196V208L1178 210 1172 207Z" fill="#4da8d4"/><path d="M1167 185 1172 187V205L1168 203Z" fill="#777" stroke="#444"/>
<!-- transition -->
<path d="M1214 188 1222 186 1229 190 1234 204 1218 210 1209 205Z" fill="#4da8d4"/><path d="M1214 188 1222 186 1229 190 1221 192Z" fill="#777" stroke="#333"/>
<!-- tap -->
<path d="M1126 240 1138 236 1146 242 1141 256 1126 262 1121 253Z" fill="#4da8d4"/><path d="M1126 240 1138 236 1146 242 1134 246Z" fill="#777" stroke="#333"/>
<!-- square tee -->
<path d="M1166 245 1180 236 1190 240 1190 258 1176 262 1166 258Z" fill="#4da8d4" stroke="#234" stroke-width=".3"/><path d="M1166 245 1172 248 1172 260 1166 258Z" fill="#777" stroke="#333"/>
<!-- drop cheek -->
<path d="M1210 243 1224 236 1234 243 1234 258 1218 263 1210 258Z" fill="#4da8d4"/><path d="M1210 243 1220 247V261L1210 256Z" fill="#eee" stroke="#333"/><path d="M1220 247 1226 262M1220 261 1230 246" stroke="#234" stroke-width=".5"/>
<!-- offset -->
<path d="M1120 289 1127 291 1130 292 1148 296V311L1132 310 1128 307Z" fill="#4da8d4"/><path d="M1120 288 1128 292V306L1120 302Z" fill="#777" stroke="#444"/><path d="M1140 290 1148 294V298L1140 295Z" fill="#4da8d4"/>
<!-- 45 -->
<path d="M1170 300 1180 288 1189 296V309L1177 313 1166 310Z" fill="#4da8d4"/><path d="M1166 308 1180 287 1184 290 1172 308Z" fill="#777" stroke="#333"/><path d="M1174 308 1180 303 1186 310Z" fill="#fff"/>
<!-- breeches -->
<path d="M1212 296 1224 286 1234 290 1232 304 1224 312 1214 310Z" fill="#4da8d4"/><path d="M1210 293 1218 289 1222 295 1214 302Z" fill="#777" stroke="#333"/>
<path d="M1204 284l4 4M1208 284l-4 4" stroke="#f08070"/>
<!-- row5 -->
<path d="M1124 340 1135 335 1145 340 1142 358H1124Z" fill="#4da8d4"/><path d="M1128 340 1135 335 1142 340 1135 344Z" fill="#777" stroke="#333"/>
<path d="M1165 358 1182 336 1190 342 1182 358Z" fill="#4da8d4"/>
<path d="M1212 340 1224 336 1232 340V358H1212Z" fill="#4da8d4"/><path d="M1212 340 1220 344V358H1212Z" fill="#fff" stroke="#555" stroke-width="2"/>
<g font-size="6" fill="#444" text-anchor="middle">
<text x="1134" y="168">Straight</text><text x="1178" y="168">Straight Cut</text><text x="1178" y="175">(2xL)</text><text x="1222" y="168">Square Elbow</text>
<text x="1134" y="218">Radius Elbow</text><text x="1178" y="218">Reducing</text><text x="1178" y="225.500">Elbow</text><text x="1222" y="218">Transition</text>
<text x="1134" y="269">Tap</text><text x="1178" y="269">Square Tee</text><text x="1222" y="269">Drop Cheek</text><text x="1222" y="276.500">Breeches</text>
<text x="1134" y="319">Offset</text><text x="1178" y="319">45 Angle</text><text x="1222" y="319">Breeches</text>
</g>
<rect x="1110" y="357" width="170" height="14" fill="#f4f4f4"/>
<rect x="1258" y="361" width="30" height="10" fill="#eee" stroke="#bbb" stroke-width=".6"/><text x="1261" y="368" font-size="6" fill="#444">Settings</text>
<path d="M1113 361h7v8h-7z" fill="#ddd" stroke="#3a6ac8" stroke-width=".6"/><path d="M1115 363l4 4" stroke="#d84a20"/>
<rect x="1110" y="371" width="170" height="10" fill="#cbcbcb"/><rect x="1110" y="371" width="56" height="10" fill="#f2f2f2"/>
<g font-size="6" fill="#444"><text x="1112" y="379" textLength="52" lengthAdjust="spacingAndGlyphs">MEP Fabrication Parts</text><text x="1170" y="379" textLength="53" lengthAdjust="spacingAndGlyphs">System Browser - R2...</text><text x="1229" y="379" textLength="51" lengthAdjust="spacingAndGlyphs">Project Browser - R2...</text></g>
<rect x="1168.500" y="384.500" width="7" height="7" fill="#eee" stroke="#555" stroke-width=".6"/><text x="1177" y="391" font-size="6.500" fill="#444">Editable Only</text>
<g transform="translate(1216,388) scale(.55)"><use href="#ic-sun"/><use href="#ic-crop" x="18"/><use href="#ic-sun" x="36"/><use href="#ic-hide" x="54"/></g>
<path d="M1250 385v6M1248 387h4M1254 388l2 3" stroke="#444"/>
<circle cx="1264" cy="388" r="3" fill="none" stroke="#aaa"/><path d="M1270 384h8l-3 4v4h-2v-4z" fill="#ccd" stroke="#557"/>
</g></g>

<!-- ===== BOTTOM LEFT ===== -->
<g clip-path="url(#cBL)"><g class="b1">
<rect y="405" width="570" height="15" fill="#f0f0f0"/>
<rect x="475" y="405" width="14" height="14" fill="#cfcfcf"/>
<rect y="421" width="570" height="18" fill="#c8c8c8"/><rect y="421" width="96" height="18" fill="#fff"/>
<text x="6" y="435" font-size="10" font-weight="bold" fill="#444" textLength="71" lengthAdjust="spacingAndGlyphs">L2 - Mech Duct</text>
<path d="M83 427l8 8M91 427l-8 8" stroke="#333" stroke-width="1.400"/>
<text x="0" y="416" font-size="9" fill="#333" font-family="Liberation Serif" textLength="40" lengthAdjust="spacingAndGlyphs">8" = 1'-0"</text>
<use href="#ic-grid" x="57" y="412"/><use href="#ic-cube" x="74" y="412"/><use href="#ic-sun" x="91" y="412"/><use href="#ic-shade" x="110" y="412"/><use href="#ic-crop" x="126" y="412"/><use href="#ic-hide" x="145" y="412"/><use href="#ic-temp" x="162" y="412"/><use href="#ic-glass" x="179" y="412"/><use href="#ic-glass" x="197" y="412"/><use href="#ic-pin" x="215" y="412"/><use href="#ic-cam" x="232" y="412"/><use href="#ic-box" x="250" y="412"/><use href="#ic-sec" x="268" y="412"/>
<path d="M285 409l-3 3 3 3" fill="none" stroke="#444" stroke-width="1.500"/>

<!-- plan -->
<rect y="439" width="570" height="244" fill="#fff"/>
<g fill="none" stroke="#dedede" stroke-width=".8">
<g id="room">
<path d="M52 441V463H92M92 441V465M52 463V543M92 463V543M76 469H92V501H76M76 506H92V543M52 521 88 533M55 530H88V542H55Z"/>
<path d="M153 441V463H195M170 441V463M195 441V543M153 469V502H168M153 506H168V543M195 521 158 533M158 530H190V542H158Z"/>
</g>
<use href="#room" x="153"/><use href="#room" x="305"/>
</g>
<g fill="#fff" stroke="#e6e6e6"><rect x="83" y="447" width="72" height="24"/><rect x="236" y="447" width="73" height="24"/><rect x="391" y="447" width="72" height="24"/><rect x="212" y="653" width="72" height="24"/><rect x="416" y="653" width="60" height="24"/></g>
<g font-size="17" fill="#aaa" text-anchor="middle"><text x="118" y="465">W-202</text><text x="272" y="465">W-207</text><text x="427" y="465">W-211</text><text x="248" y="670">W-203</text><text x="438" y="670">W-</text></g>
<g font-size="16" font-weight="bold" fill="#a2a2a2" text-anchor="middle"><text x="248" y="643">MC</text><text x="452" y="643">MC</text></g>
<g fill="none" stroke="#dcdcdc">
<path d="M33 441V630M38 441V630M48 441V683M46 441V632"/><path d="M37 632V683M49 632V683M77 632V683"/>
<path d="M194 441V630M198 441V630M345 441V622M351 441V622"/><path d="M345 640V683M351 640V683"/>
<path d="M497 441V600M503 441V600"/>
<path d="M50 545H195M50 549H195M200 545H345M200 549H345M354 545H500M354 549H500" stroke-width="1.200"/>
<path d="M50 616H155M50 619H155M200 616H345M200 619H345M355 616H470M50 623H470" stroke-width="1"/>
<path d="M155 618V582H197M160 618V588H197M405 618V595M400 618V595"/>
<path d="M105 617A35 35 0 0 1 140 582M256 617A36 36 0 0 1 291 582M455 617A35 35 0 0 1 490 582"/>
<path d="M160 624A35 35 0 0 0 190 653M360 624A35 35 0 0 0 386 650M198 625 218 660M395 625 420 660"/>
<path d="M190 625V652M355 625V652M314 683A14 14 0 0 1 328 672"/>
</g>
<path d="M0 621H470" stroke="#999" stroke-width=".7"/>
<path d="M10 615H25M40 615H90M108 615H155M170 615H190M205 615H250M265 615H340M360 615H470" stroke="#8a8a8a" stroke-width=".8"/>
<path d="M10 662H22M38 662H90M110 662H165M180 662H210M285 662H330M345 662H355M370 662H415" stroke="#888" stroke-width=".8"/>
<path d="M44 441V610M47 610V680" stroke="#888" stroke-dasharray="30 6" stroke-width=".7"/>
<path d="M350 600V660" stroke="#aaa" stroke-dasharray="12 4" stroke-width=".7"/>
<rect x="103" y="525" width="94" height="122" fill="none" stroke="#999" stroke-width=".7" stroke-dasharray="7 4"/>
<rect x="117" y="545" width="10" height="3" fill="#8aa5d8"/>
<rect x="165" y="590" width="19" height="19" fill="#2f6ae0"/><rect x="173" y="595" width="10" height="6" fill="none" stroke="#1e3fa0"/>
<path d="M165 609V620H184V609M165 628V633H184V628M173 620V628" fill="none" stroke="#666" stroke-width=".7"/>
<!-- plan duct -->
<path d="M267 545H278V568H420V545H431V568H510V578H267Z" fill="#a9b5f0"/>
<rect x="367" y="578" width="15" height="12" fill="#a9b5f0"/>
<path d="M267 546H278M420 546H431" stroke="#6e7fd0" stroke-width="2"/>
<path d="M271 547V568M275 547V568M424 547V568M428 547V568M278 568V578M333 568V578M335 568V578M365 568V578M382 568V578M400 568V578M402 568V578M420 568V578M431 568V578M374 578V590" stroke="#6a78c8" stroke-width=".6"/>
<path d="M285 573H485" stroke="#6a78c8" stroke-width=".6" stroke-dasharray="10 5"/>
<rect x="361" y="590" width="8" height="21" fill="#3a3a44"/><rect x="367" y="590" width="16" height="21" fill="#1c3cb0"/><path d="M361 611H383V621H361" fill="none" stroke="#666" stroke-width=".7"/>

<rect y="683" width="570" height="14" fill="#f0f0f0"/>
<text x="0" y="694" font-size="9" fill="#333" font-family="Liberation Serif" textLength="40" lengthAdjust="spacingAndGlyphs">8" = 1'-0"</text>
<use href="#ic-grid" x="57" y="690"/><use href="#ic-cube" x="74" y="690"/><use href="#ic-sun" x="91" y="690"/><path d="M106 690h4M108 686l4 4M106 694l5-3" stroke="#ccc"/><use href="#ic-hide" x="127" y="690"/><use href="#ic-temp" x="145" y="690"/><use href="#ic-glass" x="162" y="690"/><use href="#ic-pin" x="179" y="690"/><use href="#ic-cam" x="197" y="690"/><use href="#ic-sec" x="214" y="690"/>
<path d="M232 687l-3 3 3 3" fill="none" stroke="#444" stroke-width="1.500"/>
<rect y="698" width="570" height="22" fill="#c8c8c8"/>
<text x="0" y="713" font-size="10.500" fill="#444">elects.</text>
<rect x="306" y="701" width="130" height="13" fill="#fff"/>
<path d="M291 707l3-3h7l2 3v9h-12z" fill="#cfe0f5" stroke="#3a6ab0"/><path d="M295 716V704M299 716V704" stroke="#3a6ab0"/>
</g></g>

<!-- ===== BOTTOM RIGHT ===== -->
<g clip-path="url(#cBR)"><g class="b1">
<!-- sliver -->
<rect x="440" y="405" width="152" height="315" fill="#fff"/>
<path d="M572 408H587V436H572Z" fill="#a9cdf5"/><path d="M572 408 587 420V436H572Z" fill="#8bb8ee"/><path d="M570 434H587" stroke="#4a88c8"/>
<path d="M559 447H582V466H549Z" fill="#abd2f7"/><path d="M548 468H582V487H538Z" fill="#bcdcfa"/>
<path d="M559 447H582V487" fill="none" stroke="#7aa8d8" stroke-width=".7"/>
<path d="M540 510H582V520H532Z" fill="#cfcfcf"/>
<path d="M583 438H592" stroke="#ccc"/>
<circle cx="585" cy="439" r="2.500" fill="none" stroke="#2a6ab0"/><path d="M584 442l-2 2" stroke="#2a6ab0"/>
<rect x="583" y="445" width="9" height="255" fill="#f2f2f2"/><rect x="583" y="478" width="8" height="44" fill="#ccc"/>
<path d="M586 452l2-2 2 2" stroke="#888" fill="none"/>
<path d="M586 688l2 2 2-2" stroke="#888" fill="none"/>
<text x="516" y="701" font-size="7" font-style="italic" fill="#333" text-anchor="middle" textLength="73" lengthAdjust="spacingAndGlyphs">Most Recently Used Types</text>
<path d="M448 703H592" stroke="#ddd"/>
<text x="443" y="713" font-size="7" fill="#333" textLength="119" lengthAdjust="spacingAndGlyphs">Rectangular Duct : Mitered Elbows / Tees</text>
<path d="M591 440V720" stroke="#bbb"/>

<!-- 3D view -->
<rect x="593" y="405" width="458" height="148" fill="#fff"/>
<g fill="none" stroke="#888" stroke-width=".7" stroke-dasharray="24 8 10 10">
<path d="M812 408 1050 452M680 449 1050 517"/>
<path d="M680 449 593 503M642 408 593 438"/>
</g>
<rect x="685" y="417" width="8" height="6" fill="#111" transform="rotate(8 689 420)"/>
<path d="M695 497 704 493 713 498 713 514 703 516 694 512Z" fill="#0d0d0d"/><path d="M702 495h6" stroke="#444"/>
<g>
<path d="M769 445 782 435 789 437V442L778 444Z" fill="#737384"/><path d="M782 434 789 436V442L782 439Z" fill="#1f44c0"/>
<path d="M872 460 882 453 887 455V458L880 461Z" fill="#737384"/><path d="M882 452 887 454V459L882 457Z" fill="#1f44c0"/>
<path d="M963 479 975 472 983 474V477L968 485Z" fill="#737384"/><path d="M975 471 983 473V478L976 475Z" fill="#1f44c0"/>
<path d="M769 445 778 442 965 478 968 482Z" fill="#74748a"/>
<path d="M769 445 968 482V485L769 449Z" fill="#26262e"/>
<path d="M839 458 843 459V464L839 463ZM855 461 858 462V466L855 465Z" fill="#1f44c0"/>
<path d="M824 460 833 456 838 458 835 461Z" fill="#77778a"/>
<path d="M824 460 835 461V508L824 507Z" fill="#3c3c46"/><path d="M835 461 838 458V506L835 508Z" fill="#77777f"/>
<path d="M819 510 830 512V538L819 535Z" fill="#0b0b10" stroke="#1e2f90" stroke-width=".7"/><path d="M830 512 840 507V535L830 539Z" fill="#1f1f28" stroke="#1e2f90" stroke-width=".5"/>
<path d="M819 526 830 528" stroke="#1e2f90"/>
</g>
<ellipse cx="1030" cy="419" rx="15" ry="5" fill="#f0f0f0"/><path d="M1023 409 1032 405 1038 409V420L1030 423 1023 420Z" fill="#e2e2e2" stroke="#d0d0d0"/>
<rect x="1051" y="405" width="9" height="315" fill="#efefef"/><rect x="1051" y="470" width="9" height="8" fill="#ccc"/><rect x="1051" y="656" width="9" height="8" fill="#ccc"/>
<path d="M1053 546l3 3 3-3M1053 582l3-3 3 3" fill="none" stroke="#555"/>
<rect x="1060" y="405" width="2" height="315" fill="#ccc"/>
<rect x="593" y="553" width="458" height="10" fill="#f0f0f0"/>
<text x="596" y="561" font-size="7.500" fill="#444" textLength="32" lengthAdjust="spacingAndGlyphs">1/8" = 1'-0"</text>
<g transform="translate(638,558) scale(.72)"><use href="#ic-grid"/><use href="#ic-cube" x="16"/><use href="#ic-sun" x="31"/><use href="#ic-shade" x="49"/><use href="#ic-crop" x="64"/><use href="#ic-hide" x="80"/><use href="#ic-temp" x="96"/><use href="#ic-glass" x="112"/><use href="#ic-glass" x="128"/><use href="#ic-pin" x="144"/><use href="#ic-cam" x="160"/><use href="#ic-box" x="176"/><use href="#ic-sec" x="192"/></g>
<path d="M788 556l-2 2 2 2M1044 556l2 2-2 2" fill="none" stroke="#444"/>
<rect x="912" y="553" width="10" height="10" fill="#ccc"/>
<rect x="593" y="563" width="458" height="13" fill="#c8c8c8"/><rect x="593" y="563" width="71" height="13" fill="#fff"/>
<rect x="594" y="566" width="6" height="7" fill="#eee" stroke="#999" stroke-width=".6"/>
<text x="605" y="573" font-size="7" font-weight="bold" fill="#444" textLength="46" lengthAdjust="spacingAndGlyphs">L2 - Mech Duct</text>
<path d="M655 567l5 5M660 567l-5 5" stroke="#333"/>
<path d="M1053 569h6M1054 571h4l-2 2z" stroke="#555" fill="#555"/>
<!-- plan -->
<rect x="593" y="576" width="458" height="144" fill="#fff"/>
<g fill="none" stroke="#d2d2d2" stroke-width=".7">
<path d="M727 576V720M747 576V720M762 576V621M732 576 762 621M762 576 732 621M732 655 762 720M762 655 732 720M762 652V720"/>
<path d="M762 647H888V720M762 660H875V720"/>
<path d="M998 677V720M1012 677V720M998 677H1012"/>
</g>
<path d="M593 621H1051V652H593Z" fill="#b3c6f8"/>
<path d="M965 577H996V621H965Z" fill="#b3c6f8"/>
<rect x="803" y="652" width="46" height="12" fill="#b3c6f8"/>
<g stroke="#5d70c0" stroke-width=".6" fill="none">
<path d="M593 621H1051M593 652H1051M965 577V621M996 577V621M980 577V619M965 619H996"/>
<path d="M593 637H635M645 637H801M849 637H963M999 637H1051"/>
<path d="M694 621V652M702 621V652M747 621V652M801 621V652M849 621V652M901 621V652M907 621V652M963 621V652M999 621V652"/>
<path d="M803 652V664H849V652"/>
</g>
<circle cx="746" cy="622" r="2" fill="#5d80e0"/><circle cx="824" cy="633" r="2" fill="#5d80e0"/>
<rect x="767" y="622" width="50" height="7" fill="none" stroke="#92a4d8" stroke-width=".6"/>
<text x="768" y="628" font-size="6.500" fill="#3a5ab0">2' - 1 63/128"</text>
<path d="M782 634V641M790 634V641M782 637H790" stroke="#2a4ab0" stroke-width="1"/>
<rect x="821" y="650" width="8" height="9" fill="#fff" stroke="#1a4ab0"/><path d="M825 651V658M822 654.500H828" stroke="#1a4ab0" stroke-width="2"/>
<rect x="821" y="660" width="8" height="8" fill="#fff" stroke="#1a4ab0"/><path d="M825 661V667M822 664H828" stroke="#1a4ab0" stroke-width="2"/>
<text x="853" y="667" font-size="6.500" fill="#3a5ab0" transform="rotate(-90 853 667)">0' - 3"</text>
<path d="M860 656V662M868 656V662M860 659H868" stroke="#2a4ab0"/>
<rect x="784" y="671" width="65" height="49" fill="#444"/>
<rect x="803" y="683" width="44" height="37" fill="#1c3cb0"/>

<!-- browser -->
<rect x="1062" y="405" width="218" height="315" fill="#fff"/>
<rect x="1116" y="432" width="16" height="10" fill="#e8e8e8"/>
<path d="M1080 405V590M1090 416V581M1101 425V437M1112 432H1118M1101 482V572M1112 491V530M1112 538V546M1112 557V570M1112 495H1118M1112 504H1118M1112 514H1118M1112 524H1118M1112 543H1118M1112 562H1118M1112 572H1118" stroke="#e2e2e2" fill="none" stroke-width=".7"/>
<use href="#minus" x="1079" y="409"/><use href="#minus" x="1090" y="418"/><use href="#minus" x="1101" y="428"/><use href="#plus" x="1079" y="447"/><use href="#minus" x="1079" y="456"/><use href="#plus" x="1090" y="466"/><use href="#minus" x="1090" y="476"/><use href="#minus" x="1101" y="485"/><use href="#minus" x="1101" y="533"/><use href="#minus" x="1101" y="552"/><use href="#plus" x="1090" y="581"/><use href="#plus" x="1079" y="591"/><use href="#plus" x="1068" y="610"/><use href="#plus" x="1068" y="629"/><use href="#plus" x="1068" y="639"/><use href="#plus" x="1068" y="649"/>
<rect x="1075" y="597" width="8" height="8" fill="#bbb" stroke="#999" stroke-width=".5"/><rect x="1075" y="606" width="8" height="8" fill="#fff" stroke="#888" stroke-width=".6"/><path d="M1075 609H1083M1075 612H1083M1078 606V614" stroke="#aaa" stroke-width=".5"/><rect x="1075" y="616" width="8" height="8" fill="#bbb" stroke="#aaa" stroke-width=".5"/><rect x="1075" y="625" width="8" height="8" fill="#e2e2e2" stroke="#666" stroke-width=".6"/><rect x="1075" y="635" width="8" height="8" fill="#eee" stroke="#666" stroke-width=".6"/><rect x="1075" y="647" width="8" height="4" fill="#f0a030"/>
<g font-size="7" fill="#555">
<text x="1087" y="411">Coordination</text><text x="1098" y="420.500">HVAC</text><text x="1109" y="430">3D Views</text><text x="1120" y="440">[3D]</text>
<text x="1087" y="449.500">Electrical</text><text x="1087" y="459">Mechanical</text><text x="1098" y="468.500">HVAC</text><text x="1098" y="478">Mech Duct</text>
<text x="1109" y="487.500">Floor Plans</text><text x="1120" y="497.500">L1 - Mech Duct</text><text x="1120" y="507" font-weight="bold" fill="#333">L2 - Mech Duct</text><text x="1120" y="516.500">L3 - Mech Duct</text><text x="1120" y="526.500">L4 - Mech Duct</text>
<text x="1109" y="536">3D Views</text><text x="1120" y="545.500">3D - Mech Duct</text><text x="1109" y="555">Sections (Building Section)</text><text x="1120" y="564.500">HVAC-1</text><text x="1120" y="574">HVAC-2</text>
<text x="1098" y="583.500">Mech Pipe</text><text x="1087" y="593.500">Plumbing</text><text x="1084.500" y="603.500">Legends</text><text x="1084.500" y="613">Schedules/Quantities (all)</text><text x="1084.500" y="622.500">Sheets (all)</text><text x="1084.500" y="632">Families</text><text x="1084.500" y="641.500">Groups</text><text x="1084.500" y="651.500">Revit Links</text>
</g>
</g></g>
</svg>
</body></html>
